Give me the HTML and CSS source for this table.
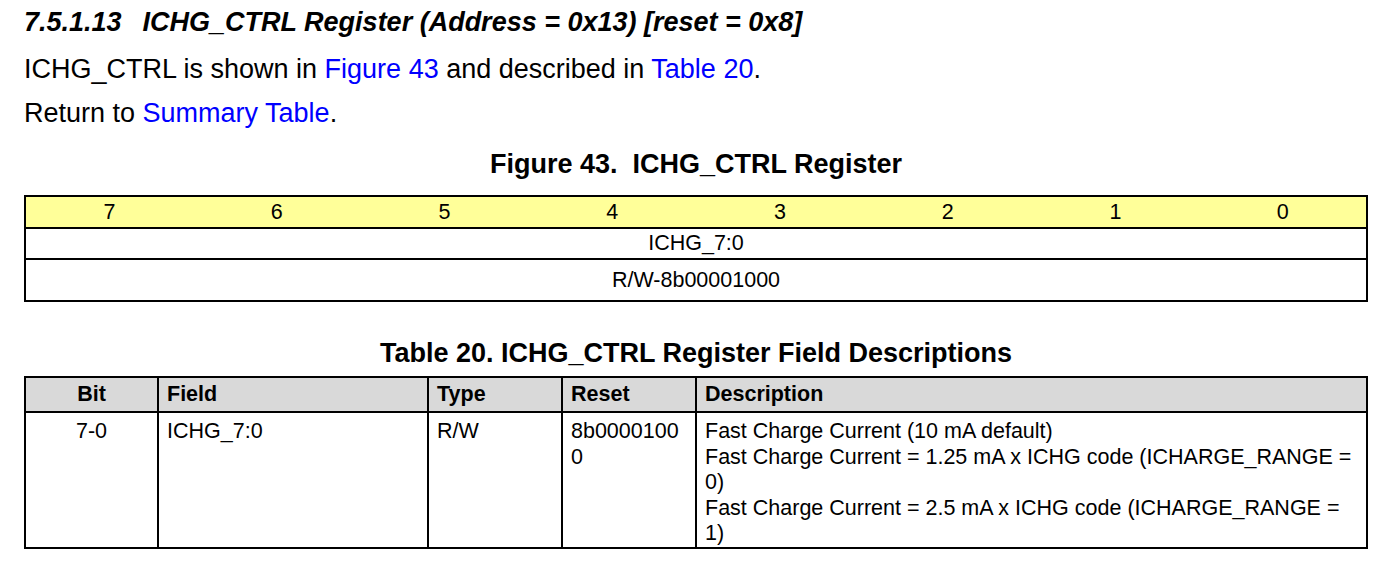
FILE: index.html
```html
<!DOCTYPE html>
<html>
<head>
<meta charset="utf-8">
<link rel="stylesheet" href="styles.css">
</head>
<body>
<div class="page">
  <h4 class="sec-title"><span class="sec-num">7.5.1.13</span>ICHG_CTRL Register (Address = 0x13) [reset = 0x8]</h4>
  <p class="para p1">ICHG_CTRL is shown in <a class="link" href="#">Figure 43</a> and described in <a class="link" href="#">Table 20</a>.</p>
  <p class="para p2">Return to <a class="link" href="#">Summary Table</a>.</p>

  <div class="caption fig-caption">Figure 43.&nbsp;&nbsp;ICHG_CTRL Register</div>
  <table class="reg">
    <tr class="bits">
      <td>7</td><td>6</td><td>5</td><td>4</td><td>3</td><td>2</td><td>1</td><td>0</td>
    </tr>
    <tr class="fieldrow"><td colspan="8">ICHG_7:0</td></tr>
    <tr class="resetrow"><td colspan="8">R/W-8b00001000</td></tr>
  </table>

  <div class="caption tbl-caption">Table 20. ICHG_CTRL Register Field Descriptions</div>
  <table class="fields">
    <colgroup>
      <col class="c-bit"><col class="c-field"><col class="c-type"><col class="c-reset"><col class="c-desc">
    </colgroup>
    <tr class="head">
      <th class="center">Bit</th><th>Field</th><th>Type</th><th>Reset</th><th>Description</th>
    </tr>
    <tr class="body">
      <td class="center">7-0</td>
      <td>ICHG_7:0</td>
      <td>R/W</td>
      <td>8b0000100<br>0</td>
      <td>
        <div class="dl">Fast Charge Current (10 mA default)</div>
        <div class="dl">Fast Charge Current = 1.25 mA x ICHG code (ICHARGE_RANGE =<br>0)</div>
        <div class="dl">Fast Charge Current = 2.5 mA x ICHG code (ICHARGE_RANGE =<br>1)</div>
      </td>
    </tr>
  </table>
</div>
</body>
</html>
```

FILE: styles.css
```css
html, body {
  margin: 0;
  padding: 0;
  background: #ffffff;
}
body {
  font-family: "Liberation Sans", Arial, sans-serif;
  color: #000;
}
.page {
  padding: 0 26px 0 24px;
}
.sec-title {
  margin: 0;
  padding-top: 7px;
  font-size: 27px;
  line-height: 30px;
  font-weight: bold;
  font-style: italic;
}
.sec-num {
  margin-right: 21px;
}
.para {
  margin: 0;
  font-size: 27px;
  line-height: 30px;
}
.p1 { margin-top: 17px; }
.p2 { margin-top: 14px; }
.link {
  color: #0000ff;
  text-decoration: none;
}
.caption {
  text-align: center;
  font-weight: bold;
  font-size: 27px;
  line-height: 30px;
}
.fig-caption {
  margin-top: 21px;
  margin-bottom: 16px;
}
table {
  width: 100%;
  border-collapse: collapse;
  table-layout: fixed;
}
.reg td {
  border: 2px solid #000;
  text-align: center;
  font-size: 21.5px;
  padding: 0;
}
.reg .bits td {
  background: #ffff99;
  height: 30px;
  border-left: none;
  border-right: none;
}
.reg .bits td:first-child { border-left: 2px solid #000; }
.reg .bits td:last-child { border-right: 2px solid #000; }
.reg .fieldrow td { height: 29px; }
.reg .resetrow td { height: 40px; }
.tbl-caption {
  margin-top: 36px;
  margin-bottom: 8px;
}
.fields th, .fields td {
  border: 2px solid #000;
  font-size: 21.5px;
  text-align: left;
  vertical-align: top;
  padding: 0 8px;
}
.fields th {
  background: #d9d9d9;
  font-weight: bold;
  height: 33px;
  vertical-align: middle;
}
.fields th.center, .fields td.center { text-align: center; }
.fields td {
  padding-top: 6px;
  padding-bottom: 0;
  line-height: 25.5px;
}
.c-bit { width: 133px; }
.c-field { width: 270px; }
.c-type { width: 134px; }
.c-reset { width: 134px; }
.dl { line-height: 25.5px; }
```
